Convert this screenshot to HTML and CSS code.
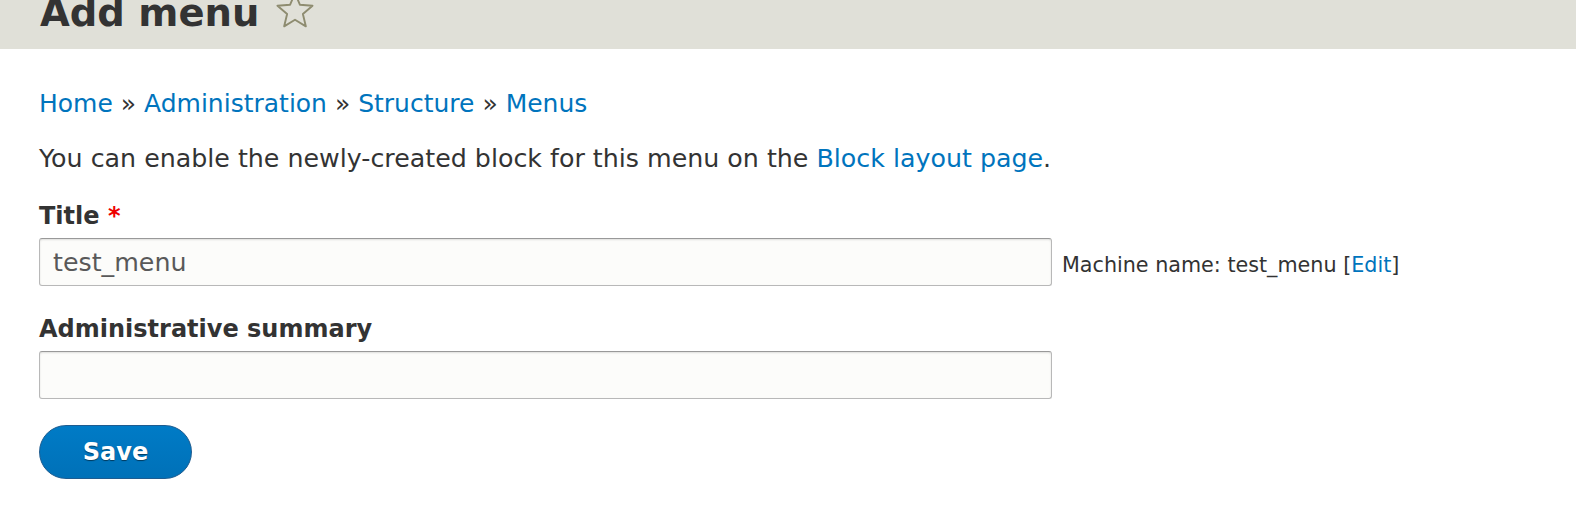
FILE: index.html
```html
<!DOCTYPE html>
<html lang="en">
<head>
<meta charset="utf-8">
<title>Add menu</title>
<link rel="stylesheet" href="styles.css">
</head>
<body>
<header class="page-header">
  <h1 class="page-title">Add menu <span class="shortcut"><svg viewBox="0 0 40 38" width="38" height="36"><polygon points="20,1.05 25.14,13.42 38.5,14.49 28.32,23.2 31.43,36.24 20,29.25 8.57,36.24 11.68,23.2 1.5,14.49 14.86,13.42" fill="none" stroke="#8e8c70" stroke-width="2" stroke-linejoin="round"/></svg></span></h1>
</header>
<main class="content">
  <nav class="breadcrumb"><a href="#">Home</a> » <a href="#">Administration</a> » <a href="#">Structure</a> » <a href="#">Menus</a></nav>
  <p class="help">You can enable the newly-created block for this menu on the <a href="#">Block layout page</a>.</p>
  <form class="menu-form">
    <div class="form-item">
      <label class="form-label">Title <span class="required">*</span></label>
      <div class="field-row">
        <input class="form-text" type="text" value="test_menu">
        <span class="machine-name">Machine name: test_menu [<a href="#">Edit</a>]</span>
      </div>
    </div>
    <div class="form-item form-item-last">
      <label class="form-label">Administrative summary</label>
      <div class="field-row">
        <input class="form-text" type="text" value="">
      </div>
    </div>
    <div class="actions">
      <button class="button-primary" type="button">Save</button>
    </div>
  </form>
</main>
</body>
</html>
```
FILE: styles.css
```css
html, body {
  margin: 0;
  padding: 0;
  background: #fff;
}
body {
  font-family: "DejaVu Sans", Verdana, sans-serif;
  color: #333;
  font-size: 25.3px;
}
a {
  color: #0074bd;
  text-decoration: none;
}
.page-header {
  background: #e0e0d8;
  height: 49px;
  overflow: hidden;
  padding: 0 40px;
}
.page-title {
  margin: -7px 0 0;
  font-size: 38.5px;
  line-height: 39px;
  font-weight: bold;
  color: #333;
  display: flex;
  align-items: center;
}
.shortcut {
  display: inline-flex;
  align-self: flex-start;
  margin-left: 17px;
  margin-top: -1px;
}
.content {
  padding: 0 39px;
}
.breadcrumb {
  margin-top: 41px;
  font-size: 25px;
  line-height: 28px;
}
.help {
  margin: 27px 0 0;
  line-height: 28px;
}
.menu-form {
  margin-top: 27px;
}
.form-item {
  margin-bottom: 27px;
}
.form-item-last {
  margin-bottom: 26px;
}
.form-label {
  display: block;
  font-weight: bold;
  font-size: 24px;
  line-height: 28px;
  padding-top: 2px;
  margin-bottom: 8px;
}
.required {
  color: #e00;
}
.field-row {
  display: flex;
  align-items: center;
  gap: 10px;
}
.form-text {
  box-sizing: border-box;
  width: 1013px;
  height: 48px;
  border: 1px solid #b8b8b8;
  border-top-color: #999;
  border-radius: 3px;
  background: #fcfcfa;
  box-shadow: inset 0 1px 2px rgba(0,0,0,0.12);
  font-family: inherit;
  font-size: 25.3px;
  color: #595959;
  padding: 0 13px;
  margin: 0;
}
.machine-name {
  font-size: 20.7px;
  color: #333;
  padding-top: 6px;
}
.button-primary {
  display: block;
  width: 153px;
  height: 54px;
  border-radius: 27px;
  border: 1px solid #1e5c90;
  background: linear-gradient(#007bc6, #0071b8);
  color: #fff;
  font-family: inherit;
  font-size: 24px;
  font-weight: bold;
  text-shadow: 0 1px 1px rgba(0,0,0,0.5);
  padding: 0;
  margin: 0;
}
```
